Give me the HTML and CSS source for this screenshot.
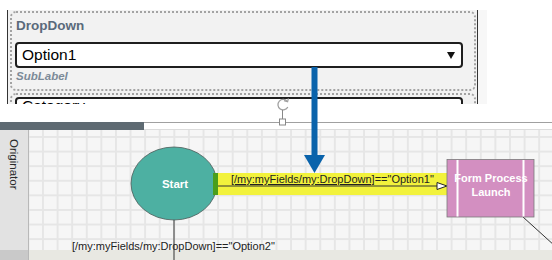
FILE: index.html
```html
<!DOCTYPE html>
<html lang="en">

<head>
    <meta charset="UTF-8">
    <meta name="viewport" content="width=device-width, initial-scale=1.0">
    <title>DropDown Rule</title>
    <link rel="stylesheet" href="styles.css">
</head>

<body>
    <!-- Form preview -->
    <div class="form-panel">
        <div class="form-inner">
            <div class="field">
                <div class="field-label">DropDown</div>
                <div class="select">
                    <span>Option1</span>
                    <span class="caret"></span>
                </div>
                <div class="sub-label">SubLabel</div>
            </div>
            <div class="field">
                <div class="select select-next">
                    <span>Category</span>
                </div>
            </div>
        </div>
    </div>

    <!-- Designer scrollbar -->
    <div class="toolbar">
        <div class="thumb"></div>
    </div>

    <!-- Workflow canvas -->
    <div class="canvas">
        <div class="lane-header">
            <span>Originator</span>
        </div>
        <div class="grid">
            <svg class="diagram" viewBox="30 130 522 130" width="522" height="130">
                <line x1="175" y1="219" x2="175" y2="262" stroke="#333" stroke-width="1" />
                <line x1="524" y1="217" x2="556" y2="246" stroke="#333" stroke-width="1" />

                <rect x="216" y="173" width="234" height="22" fill="#f2f23c" />
                <rect x="448" y="173" width="2" height="22" fill="#e8b040" />
                <ellipse cx="175" cy="183.5" rx="43" ry="36.5" fill="#4db0a2" stroke="#4a5a58" stroke-width="0.8" />
                <rect x="214" y="173" width="5" height="22" fill="#4a9e1c" />
                <text class="node-text start-text" x="176" y="187.5" text-anchor="middle">Start</text>

                <line x1="219" y1="186" x2="438" y2="186" stroke="#333" stroke-width="1" />
                <polygon points="438,182.5 448,186 438,189.5" fill="#fff" stroke="#222" stroke-width="1" />
                <text class="edge-text" x="232" y="183"><tspan text-decoration="underline">[/my:myFields/my:DropDown]</tspan>=="Option1"</text>

                <rect x="448" y="159.5" width="87" height="57.5" fill="#d38fc1" stroke="#7a7a7a" stroke-width="0.8" />
                <line x1="458.5" y1="160" x2="458.5" y2="216.5" stroke="#fff" stroke-width="2" />
                <line x1="524.5" y1="160" x2="524.5" y2="216.5" stroke="#fff" stroke-width="2" />
                <text class="node-text" x="492" y="182" text-anchor="middle">Form Process</text>
                <text class="node-text" x="492" y="196" text-anchor="middle">Launch</text>

                <text class="edge-text" x="73" y="250">[/my:myFields/my:DropDown]=="Option2"</text>
            </svg>
        </div>
    </div>

    <!-- Overlays -->
    <svg class="rotate-handle" width="16" height="30" viewBox="0 0 16 30">
        <path d="M11.2 3.4 A5.2 5.2 0 1 0 11.8 9" fill="none" stroke="#a0a0a0" stroke-width="1.3" />
        <path d="M8 2.6 L11.6 3.8 L12.4 0.4" fill="none" stroke="#a0a0a0" stroke-width="1.2" />
        <line x1="6.5" y1="12" x2="6.5" y2="21" stroke="#888" stroke-width="1" />
        <rect x="3.5" y="21" width="6" height="6" fill="#fff" stroke="#888" stroke-width="1" />
    </svg>

    <svg class="blue-arrow" width="24" height="106" viewBox="0 0 24 106">
        <rect x="8.5" y="0" width="6" height="90" fill="#0a63ab" />
        <polygon points="1,88 22,88 11.5,106" fill="#0a63ab" />
    </svg>
</body>

</html>
```

FILE: styles.css
```css
body {
    margin: 0;
    width: 552px;
    height: 260px;
    overflow: hidden;
    position: relative;
    font-family: "Liberation Sans", Arial, sans-serif;
    background-color: #fff;
}

.form-panel {
    margin: 10px 0 0 7px;
    width: 480px;
    height: 94px;
    overflow: hidden;
    background-color: #f7f7f7;
}

.form-inner {
    width: 471px;
    height: 94px;
    padding: 1px 0 0 2px;
    box-sizing: border-box;
    border-left: 1px solid #333;
    border-right: 1px solid #333;
    background-color: #f2f2f2;
}

.field {
    width: 466px;
    height: 80px;
    box-sizing: border-box;
    padding: 5px 0 0 3px;
    margin-bottom: 2px;
    border: 2px dotted #a3a3a3;
    border-radius: 6px;
}

.field + .field {
    padding-top: 2px;
}

.field-label {
    margin-left: 1px;
    font-size: 13.5px;
    line-height: 16px;
    font-weight: bold;
    color: #5a6a7b;
    margin-bottom: 8px;
}

.select {
    width: 448px;
    height: 26px;
    box-sizing: border-box;
    border: 2px solid #1e1e1e;
    border-radius: 4px;
    background-color: #fff;
    display: flex;
    align-items: center;
    justify-content: space-between;
    padding: 0 6px 1px 5px;
    font-size: 15.5px;
    color: #000;
}

.select-next {
    align-items: flex-start;
    padding-top: 0;
    line-height: 14px;
}

.caret {
    width: 0;
    height: 0;
    border-left: 4px solid transparent;
    border-right: 4px solid transparent;
    border-top: 7px solid #111;
    margin-top: 1px;
}

.sub-label {
    margin: 2px 0 0 1px;
    font-size: 11.5px;
    line-height: 13px;
    font-weight: bold;
    font-style: italic;
    color: #7c8a98;
}

.toolbar {
    margin-top: 18px;
    height: 6px;
    border-top: 1px solid #a0a0a0;
    border-bottom: 1px solid #dcdcdc;
    background-color: #fff;
    display: flex;
}

.thumb {
    width: 144px;
    margin-top: -1px;
    height: 8px;
    background-color: #5e6a72;
}

.canvas {
    display: flex;
    height: 130px;
}

.lane-header {
    width: 29px;
    border-right: 1px solid #b8b8b8;
    background: linear-gradient(to bottom, #e2e2e2 120px, #c9c9c9 120px);
    display: flex;
    justify-content: center;
    padding-top: 9px;
    box-sizing: border-box;
}

.lane-header span {
    writing-mode: vertical-rl;
    font-size: 11.5px;
    color: #2a2a2a;
}

.grid {
    flex: 1;
    position: relative;
    overflow: hidden;
    background-color: #f6f6f6;
    background-image:
        linear-gradient(to bottom, transparent 120px, #e8e8e2 120px),
        linear-gradient(to right, #e6e6e6 1.5px, transparent 1.5px),
        linear-gradient(to bottom, #e6e6e6 1.5px, transparent 1.5px);
    background-size: 100% 100%, 14.6px 14.6px, 14.6px 14.6px;
    background-position: 0 0, 13px 6px, 13px 6px;
}

.diagram {
    position: absolute;
    left: 0;
    top: 0;
    overflow: visible;
}

.node-text {
    font-family: "Liberation Sans", Arial, sans-serif;
    font-size: 11px;
    font-weight: bold;
    fill: #fff;
}

.start-text {
    font-size: 11.5px;
}

.edge-text {
    font-family: "Liberation Sans", Arial, sans-serif;
    font-size: 11px;
    fill: #222;
}

.rotate-handle {
    position: absolute;
    left: 276px;
    top: 98px;
}

.blue-arrow {
    position: absolute;
    left: 303px;
    top: 67px;
}
```
